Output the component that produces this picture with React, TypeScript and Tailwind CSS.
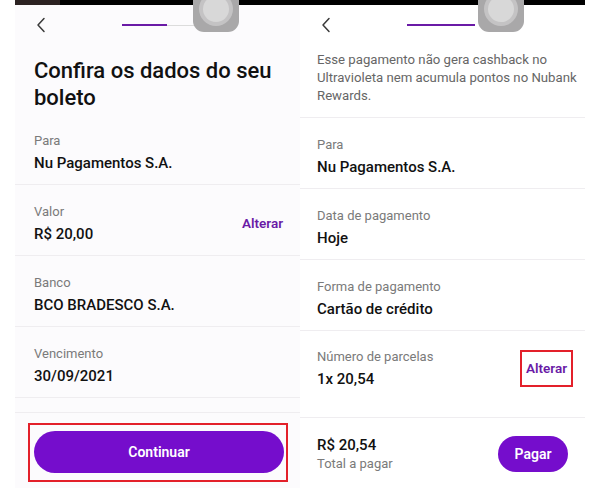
import { ReactNode } from "react";

const font = { fontFamily: "Roboto, 'Noto Sans', sans-serif" };

function TopBar({ splitLeft }: { splitLeft?: boolean }) {
  return (
    <div className="flex h-[5px] w-full bg-black">
      {splitLeft && <div className="h-full w-[45px] bg-[#2c2222]" />}
    </div>
  );
}

function AssistiveTouch({ left }: { left: number }) {
  return (
    <div
      className="absolute top-[-14px] flex h-[46px] w-[46px] items-center justify-center rounded-[11px] bg-[#a9a8a9]"
      style={{ left }}
    >
      <div className="flex h-[34px] w-[34px] items-center justify-center rounded-full bg-[#c4c3c4]">
        <div className="h-[26px] w-[26px] rounded-full bg-[#d8d8d8]" />
      </div>
    </div>
  );
}

function Chevron() {
  return (
    <svg width="10" height="16" viewBox="0 0 10 16" fill="none">
      <path d="M8 1.5 L2 8 L8 14.5" stroke="#3a3a3a" strokeWidth="1.5" strokeLinecap="round" strokeLinejoin="round" />
    </svg>
  );
}

function Row({
  label,
  value,
  action,
  boxed,
  pad,
  tall,
}: {
  label: string;
  value: string;
  action?: boolean;
  boxed?: boolean;
  pad: string;
  tall?: boolean;
}) {
  return (
    <div className={`flex items-center border-b border-[#efedf0] ${pad} ${tall ? "pt-[17px] pb-[28px]" : "pt-[18px] pb-[11px]"}`}>
      <div className="flex-1">
        <div className="text-[13px] leading-[18px] text-[#7a7a7a]">{label}</div>
        <div className="mt-[3px] text-[15px] font-medium leading-[20px] text-[#111]">{value}</div>
      </div>
      {action && (
        <div
          className={`text-[13.5px] font-semibold text-[#6a1aa6] ${
            boxed ? "border-2 border-[#e3202a] px-[4px] py-[6px] mr-[-6px]" : ""
          }`}
        >
          Alterar
        </div>
      )}
    </div>
  );
}

function Phone({ children, bg, touch, bar, split }: { children: ReactNode; bg: string; touch: number; bar: ReactNode; split?: boolean }) {
  return (
    <div className={`relative flex h-[488px] w-[285px] flex-col overflow-hidden ${bg}`}>
      <TopBar splitLeft={split} />
      {bar}
      {children}
      <AssistiveTouch left={touch} />
    </div>
  );
}

export default function App() {
  return (
    <div className="flex h-[488px] w-[600px] bg-white pl-[15px]" style={font}>
      <Phone
        bg="bg-[#fcfbfd]"
        touch={178}
        split
        bar={
          <div className="flex h-[40px] items-center pl-[21px]">
            <Chevron />
            <div className="ml-[76px] flex h-[2px] items-center">
              <div className="h-[2px] w-[45px] bg-[#6a1aa6]" />
              <div className="h-[1px] w-[30px] bg-[#dcdcdc]" />
            </div>
          </div>
        }
      >
        <h1 className="px-[19px] pt-[12px] pb-[3px] text-[22px] font-medium leading-[27px] text-[#111]">
          Confira os dados do seu boleto
        </h1>
        <Row pad="px-[19px]" label="Para" value="Nu Pagamentos S.A." />
        <Row pad="pl-[19px] pr-[17px]" label="Valor" value="R$ 20,00" action />
        <Row pad="px-[19px]" label="Banco" value="BCO BRADESCO S.A." />
        <Row pad="px-[19px]" label="Vencimento" value="30/09/2021" />
        <div className="h-[15px] border-b border-[#efedf0]" />
        <div className="pl-[13px] pr-[12px] pt-[10px]">
          <div className="border-2 border-[#e3202a] pl-[4px] pr-[2px] pt-[6px] pb-[7px]">
            <button className="flex h-[42px] w-full items-center justify-center rounded-full bg-[#750dcc] text-[14px] font-semibold text-white">
              Continuar
            </button>
          </div>
        </div>
      </Phone>
      <Phone
        bg="bg-white"
        touch={178}
        bar={
          <div className="flex h-[40px] items-center pl-[21px]">
            <Chevron />
            <div className="ml-[76px] h-[2px] w-[68px] bg-[#6a1aa6]" />
          </div>
        }
      >
        <p className="border-b border-[#efedf0] pl-[17px] pr-0 pt-[6px] pb-[12px] text-[13.2px] leading-[18px] text-[#666]">
          Esse pagamento não gera cashback no Ultravioleta nem acumula pontos no Nubank Rewards.
        </p>
        <Row pad="px-[17px]" label="Para" value="Nu Pagamentos S.A." />
        <Row pad="px-[17px]" label="Data de pagamento" value="Hoje" />
        <Row pad="px-[17px]" label="Forma de pagamento" value="Cartão de crédito" />
        <Row pad="pl-[17px] pr-[18px]" label="Número de parcelas" value="1x 20,54" action boxed tall />
        <div className="flex items-center justify-between pl-[17px] pr-[17px] pt-[17px]">
          <div>
            <div className="text-[15px] font-medium leading-[20px] text-[#111]">R$ 20,54</div>
            <div className="text-[13px] leading-[17px] text-[#7a7a7a]">Total a pagar</div>
          </div>
          <button className="mt-[1px] flex h-[36px] w-[70px] items-center justify-center rounded-full bg-[#750dcc] text-[14px] font-semibold text-white">
            Pagar
          </button>
        </div>
      </Phone>
    </div>
  );
}
